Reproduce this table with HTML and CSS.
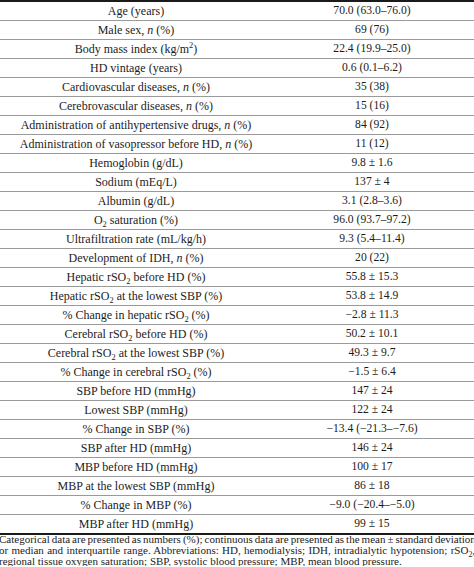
FILE: index.html
```html
<!DOCTYPE html>
<html>
<head>
<meta charset="utf-8">
<link rel="stylesheet" href="styles.css">
</head>
<body>
<div class="table">
  <div class="row"><div class="c1">Age (years)</div><div class="c2">70.0 (63.0–76.0)</div></div>
  <div class="row"><div class="c1">Male sex, <i>n</i> (%)</div><div class="c2">69 (76)</div></div>
  <div class="row"><div class="c1">Body mass index (kg/m<sup>2</sup>)</div><div class="c2">22.4 (19.9–25.0)</div></div>
  <div class="row"><div class="c1">HD vintage (years)</div><div class="c2">0.6 (0.1–6.2)</div></div>
  <div class="row"><div class="c1">Cardiovascular diseases, <i>n</i> (%)</div><div class="c2">35 (38)</div></div>
  <div class="row"><div class="c1">Cerebrovascular diseases, <i>n</i> (%)</div><div class="c2">15 (16)</div></div>
  <div class="row"><div class="c1">Administration of antihypertensive drugs, <i>n</i> (%)</div><div class="c2">84 (92)</div></div>
  <div class="row"><div class="c1">Administration of vasopressor before HD, <i>n</i> (%)</div><div class="c2">11 (12)</div></div>
  <div class="row"><div class="c1">Hemoglobin (g/dL)</div><div class="c2">9.8 ± 1.6</div></div>
  <div class="row"><div class="c1">Sodium (mEq/L)</div><div class="c2">137 ± 4</div></div>
  <div class="row"><div class="c1">Albumin (g/dL)</div><div class="c2">3.1 (2.8–3.6)</div></div>
  <div class="row"><div class="c1">O<sub>2</sub> saturation (%)</div><div class="c2">96.0 (93.7–97.2)</div></div>
  <div class="row"><div class="c1">Ultrafiltration rate (mL/kg/h)</div><div class="c2">9.3 (5.4–11.4)</div></div>
  <div class="row"><div class="c1">Development of IDH, <i>n</i> (%)</div><div class="c2">20 (22)</div></div>
  <div class="row"><div class="c1">Hepatic rSO<sub>2</sub> before HD (%)</div><div class="c2">55.8 ± 15.3</div></div>
  <div class="row"><div class="c1">Hepatic rSO<sub>2</sub> at the lowest SBP (%)</div><div class="c2">53.8 ± 14.9</div></div>
  <div class="row"><div class="c1">% Change in hepatic rSO<sub>2</sub> (%)</div><div class="c2">−2.8 ± 11.3</div></div>
  <div class="row"><div class="c1">Cerebral rSO<sub>2</sub> before HD (%)</div><div class="c2">50.2 ± 10.1</div></div>
  <div class="row"><div class="c1">Cerebral rSO<sub>2</sub> at the lowest SBP (%)</div><div class="c2">49.3 ± 9.7</div></div>
  <div class="row"><div class="c1">% Change in cerebral rSO<sub>2</sub> (%)</div><div class="c2">−1.5 ± 6.4</div></div>
  <div class="row"><div class="c1">SBP before HD (mmHg)</div><div class="c2">147 ± 24</div></div>
  <div class="row"><div class="c1">Lowest SBP (mmHg)</div><div class="c2">122 ± 24</div></div>
  <div class="row"><div class="c1">% Change in SBP (%)</div><div class="c2">−13.4 (−21.3–−7.6)</div></div>
  <div class="row"><div class="c1">SBP after HD (mmHg)</div><div class="c2">146 ± 24</div></div>
  <div class="row"><div class="c1">MBP before HD (mmHg)</div><div class="c2">100 ± 17</div></div>
  <div class="row"><div class="c1">MBP at the lowest SBP (mmHg)</div><div class="c2">86 ± 18</div></div>
  <div class="row"><div class="c1">% Change in MBP (%)</div><div class="c2">−9.0 (−20.4–−5.0)</div></div>
  <div class="row last"><div class="c1">MBP after HD (mmHg)</div><div class="c2">99 ± 15</div></div>
</div>
<div class="note">
  <span class="line first">Categorical data are presented as numbers (%); continuous data are presented as the mean ± standard deviation</span>
  <span class="line">or median and interquartile range. Abbreviations: HD, hemodialysis; IDH, intradialytic hypotension; rSO<sub>2</sub>,</span>
  <span class="line final">regional tissue oxygen saturation; SBP, systolic blood pressure; MBP, mean blood pressure.</span>
</div>
</body>
</html>
```

FILE: styles.css
```css
html, body {
  margin: 0;
  padding: 0;
  background: #ffffff;
}
body {
  width: 474px;
  overflow: hidden;
  font-family: "Liberation Serif", "Times New Roman", serif;
  color: #1c1c1c;
}
.table {
  border-top: 2px solid #1a1a1a;
  border-bottom: 2px solid #1a1a1a;
}
.row {
  display: grid;
  grid-template-columns: 272px 1fr;
  height: 19px;
  box-sizing: border-box;
  border-bottom: 1px solid #9a9a9a;
  align-items: center;
}
.row.last {
  border-bottom: none;
  height: 18px;
}
.c1, .c2 {
  text-align: center;
  white-space: nowrap;
  line-height: 18px;
}
.c1 {
  font-size: 12px;
}
.c2 {
  font-size: 11.6px;
  padding-right: 2px;
}
sup, sub {
  font-size: 0.7em;
  line-height: 0;
}
.note {
  margin: -1px 0 0 -1px;
  width: 476px;
  font-size: 11px;
}
.line {
  display: block;
  height: 10.8px;
  line-height: 10.8px;
  text-align: justify;
  text-align-last: justify;
  white-space: nowrap;
}
.line.first {
  word-spacing: -0.7px;
}
.line.final {
  text-align-last: left;
}
.note sub {
  font-size: 0.7em;
}
```
